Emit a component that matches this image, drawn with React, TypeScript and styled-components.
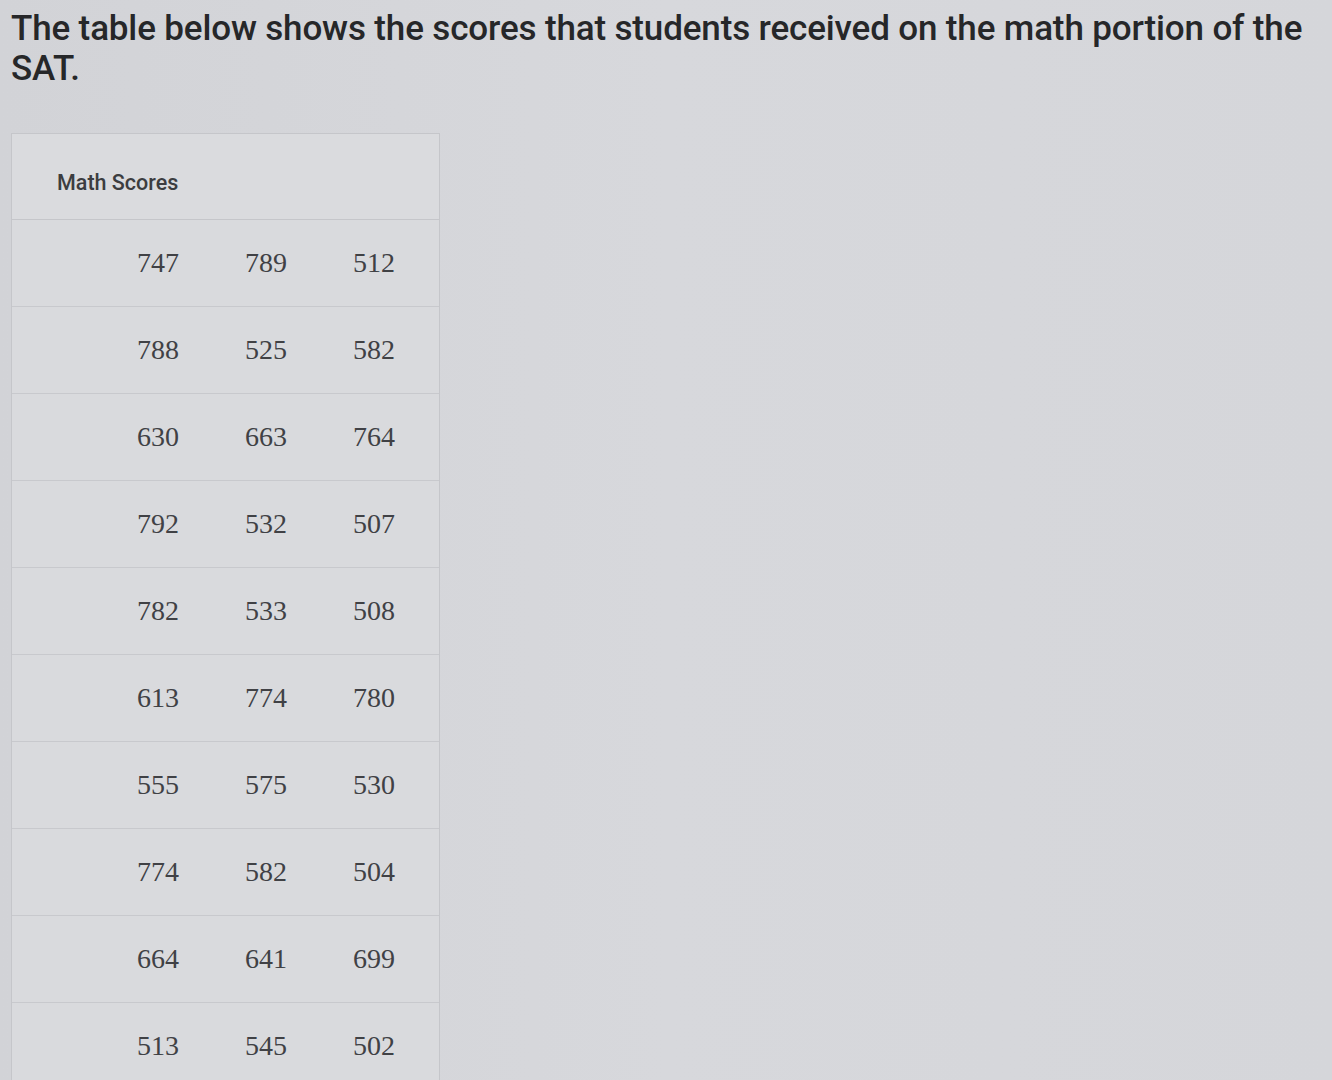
import React from "react";
import styled, { createGlobalStyle } from "styled-components";

const GlobalStyle = createGlobalStyle`
  html, body {
    margin: 0;
    padding: 0;
    background: #d4d5d9;
  }
  body {
    font-family: Roboto, "Liberation Sans", Arial, sans-serif;
  }
`;

const Page = styled.div`
  width: 1332px;
  height: 1080px;
  overflow: hidden;
  padding: 9px 0 0 11px;
  box-sizing: border-box;
  background: linear-gradient(90deg, #d2d3d7 0%, #d7d8dc 50%, #d5d6da 100%);
`;

const Question = styled.p`
  margin: 0;
  width: 1315px;
  font-size: 35px;
  font-weight: 500;
  line-height: 40px;
  color: #262729;
  letter-spacing: -0.15px;
`;

const Table = styled.div`
  margin-top: 44px;
  width: 427px;
  border: 1px solid #c5c6ca;
  border-bottom: none;
  background: #d9dadd;
`;

const HeaderRow = styled.div`
  height: 86px;
  display: flex;
  align-items: center;
  padding: 12px 0 0 45px;
  box-sizing: border-box;
  border-bottom: 1px solid #c5c6ca;
  background: #dadbde;
  font-size: 21.5px;
  font-weight: 500;
  color: #3c3d40;
`;

const Row = styled.div`
  height: 86px;
  display: grid;
  grid-template-columns: repeat(3, 108px);
  padding-left: 92px;
  align-items: center;
  border-bottom: 1px solid #c8c9cd;
`;

const Cell = styled.span`
  text-align: center;
  font-family: "Liberation Serif", "DejaVu Serif", serif;
  font-size: 28px;
  color: #404145;
`;

const scores = [
  [747, 789, 512],
  [788, 525, 582],
  [630, 663, 764],
  [792, 532, 507],
  [782, 533, 508],
  [613, 774, 780],
  [555, 575, 530],
  [774, 582, 504],
  [664, 641, 699],
  [513, 545, 502],
];

const App: React.FC = () => (
  <>
    <GlobalStyle />
    <Page>
      <Question>
        The table below shows the scores that students received on the math portion of the SAT.
      </Question>
      <Table>
        <HeaderRow>Math Scores</HeaderRow>
        {scores.map((row, i) => (
          <Row key={i}>
            {row.map((value, j) => (
              <Cell key={j}>{value}</Cell>
            ))}
          </Row>
        ))}
      </Table>
    </Page>
  </>
);

export default App;
